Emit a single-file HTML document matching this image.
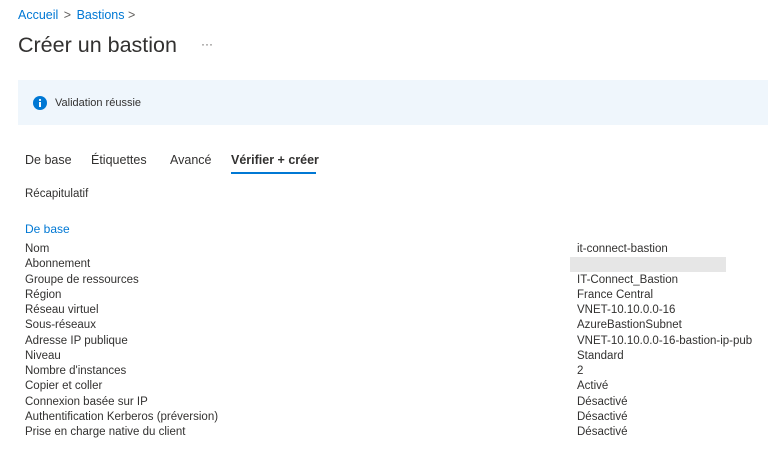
<!DOCTYPE html><html><head><meta charset="utf-8"><style>
body{margin:0;width:768px;height:452px;background:#fff;font-family:"Liberation Sans",sans-serif;color:#323130;position:relative;overflow:hidden}
.a{position:absolute;white-space:nowrap}
.r{position:absolute;font-size:11.5px;line-height:15.25px;white-space:nowrap}
</style></head><body>
<div class="a" style="left:18px;top:8px;font-size:12.5px;color:#0078d4">Accueil <span style="color:#605e5c;margin:0 2px">&gt;</span> Bastions <span style="color:#605e5c">&gt;</span></div>
<div class="a" style="left:18px;top:33px;font-size:21.5px;color:#323130">Créer un bastion</div>
<div class="a" style="left:201px;top:37px;font-size:12px;color:#605e5c">···</div>
<div class="a" style="left:18px;top:80px;width:750px;height:45px;background:#eff6fc"></div>
<svg class="a" style="left:33px;top:96px" width="14" height="14" viewBox="0 0 14 14"><circle cx="7" cy="7" r="7" fill="#0078d4"/><rect x="6" y="6" width="2" height="5" fill="#fff"/><circle cx="7" cy="4" r="1.1" fill="#fff"/></svg>
<div class="a" style="left:55px;top:97px;font-size:11px">Validation réussie</div>
<div class="a" style="left:25px;top:153px;font-size:12.5px">De base</div>
<div class="a" style="left:91px;top:153px;font-size:12.5px">Étiquettes</div>
<div class="a" style="left:170px;top:153px;font-size:12.5px">Avancé</div>
<div class="a" style="left:231px;top:153px;font-size:12.5px;font-weight:bold;color:#323130">Vérifier + créer</div>
<div class="a" style="left:231px;top:172px;width:85px;height:2px;background:#0078d4"></div>
<div class="a" style="left:25px;top:188px;font-size:11.5px">Récapitulatif</div>
<div class="a" style="left:25px;top:222px;font-size:12px;color:#0078d4">De base</div>
<div class="r" style="left:25px;top:242px">Nom<br>Abonnement<br>Groupe de ressources<br>Région<br>Réseau virtuel<br>Sous-réseaux<br>Adresse IP publique<br>Niveau<br>Nombre d'instances<br>Copier et coller<br>Connexion basée sur IP<br>Authentification Kerberos (préversion)<br>Prise en charge native du client</div>
<div class="r" style="left:577px;top:242px">it-connect-bastion<br>&nbsp;<br>IT-Connect_Bastion<br>France Central<br>VNET-10.10.0.0-16<br>AzureBastionSubnet<br>VNET-10.10.0.0-16-bastion-ip-pub<br>Standard<br>2<br>Activé<br>Désactivé<br>Désactivé<br>Désactivé</div>
<div class="a" style="left:570px;top:257px;width:156px;height:15px;background:#e6e6e6"></div>
</body></html>
